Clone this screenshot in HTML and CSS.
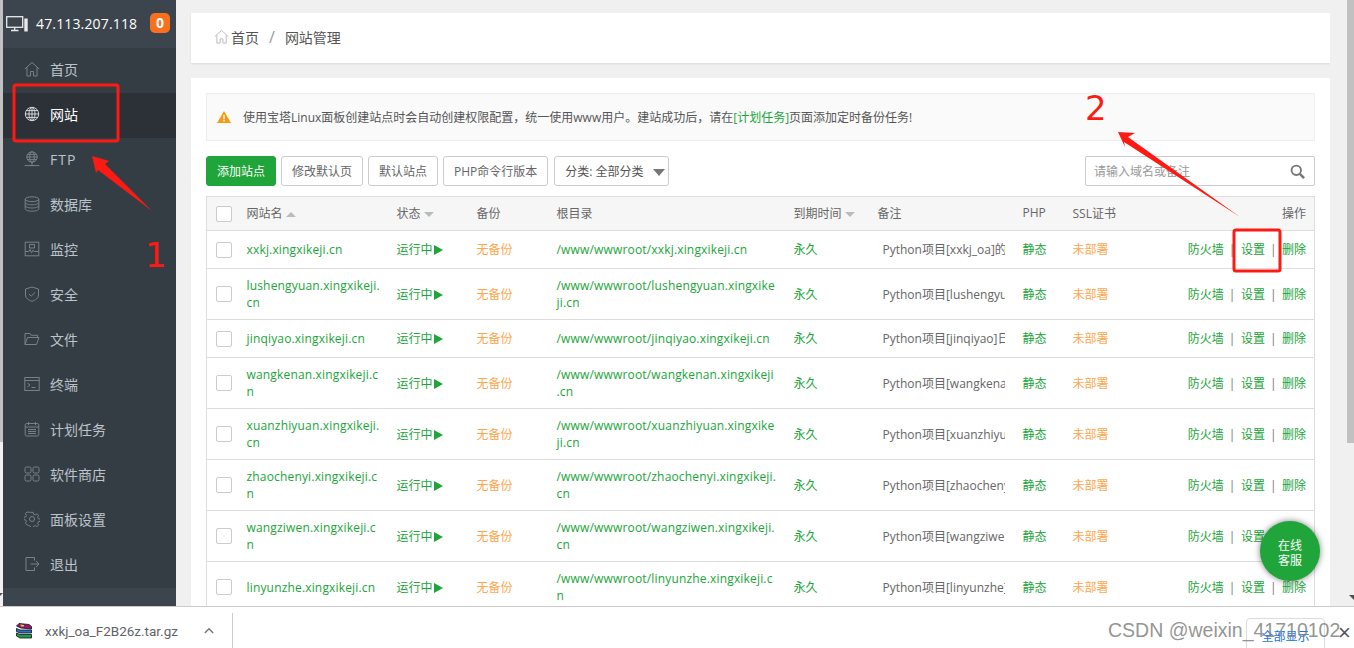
FILE: index.html
```html
<!DOCTYPE html>
<html lang="zh-CN">
<head>
    <meta charset="UTF-8">
    <title>网站管理</title>
    <link rel="stylesheet" href="styles.css">
</head>
<body>
    <div class="app">
        <div class="leftbar">
            <div class="leftbar-thumb"></div>
            <i class="leftbar-arrow"></i>
        </div>
        <aside class="sidebar">
            <div class="server">
                <svg class="server-icon" viewBox="0 0 22 16" fill="none" stroke="#e8eaec" stroke-width="1.300"><rect x=".7" y=".7" width="16" height="10.600"/><path d="M5 14.500h7.500M8.700 11.300v3"/><rect x="18.300" y="2.500" width="3.400" height="13" fill="#e8eaec" stroke="none"/></svg>
                <span class="server-ip">47.113.207.118</span>
                <span class="badge">0</span>
            </div>
            <nav class="menu">
                <a class="menu-item">
                    <svg viewBox="0 0 16 16"><path d="M.8 8 8 1.500 15.200 8M3 6.500V15h3.500v-4.500h3V15H13V6.500"/></svg>首页
                </a>
                <a class="menu-item active">
                    <svg viewBox="0 0 16 16"><circle cx="8" cy="8" r="6.700"/><ellipse cx="8" cy="8" rx="3" ry="6.700"/><path d="M8 1.300v13.400M1.300 8h13.400M2.300 4.600h11.400M2.300 11.400h11.400"/></svg>网站
                </a>
                <a class="menu-item menu-ftp">
                    <svg viewBox="0 0 16 16"><circle cx="8" cy="6" r="5.200"/><ellipse cx="8" cy="6" rx="2.300" ry="5.200"/><path d="M2.800 6h10.400M3.600 3.400h8.800M3.600 8.600h8.800M8 11.200v2.600M.6 14.600h14.800M6 14.600h4"/></svg>FTP
                </a>
                <a class="menu-item">
                    <svg viewBox="0 0 16 16"><ellipse cx="8" cy="3.200" rx="6.800" ry="2.400"/><path d="M1.200 3.200v9.600c0 1.300 3 2.400 6.800 2.400s6.800-1.100 6.800-2.400V3.200M1.200 6.400c0 1.300 3 2.400 6.800 2.400s6.800-1.100 6.800-2.400M1.200 9.600c0 1.300 3 2.400 6.800 2.400s6.800-1.100 6.800-2.400"/></svg>数据库
                </a>
                <a class="menu-item">
                    <svg viewBox="0 0 16 16"><rect x="1.200" y="1.200" width="13.600" height="13.600"/><path d="M1.200 10.500h3.600l1.200-2 1.500 3.200 1.600-2.600.9 1.400h5M5.500 3.500h5V7h-5z"/></svg>监控
                </a>
                <a class="menu-item">
                    <svg viewBox="0 0 16 16"><path d="M8 1 14.500 3v6c0 3-3 5.200-6.500 6.300C4.500 14.200 1.500 12 1.500 9V3z"/><path d="M5 8l2.200 2.200L11 6.500"/></svg>安全
                </a>
                <a class="menu-item">
                    <svg viewBox="0 0 16 16"><path d="M1 13.500V2.500h5l1.200 1.800H13.500V6.500M1 13.500h11.500L15 6.500H3.500z"/></svg>文件
                </a>
                <a class="menu-item">
                    <svg viewBox="0 0 16 16"><rect x=".8" y="1.500" width="14.400" height="13"/><path d="M.8 4.500h14.400M3.500 7l2.500 2-2.500 2M7.500 11.500h4"/></svg>终端
                </a>
                <a class="menu-item">
                    <svg viewBox="0 0 16 16"><rect x="1.200" y="2.500" width="13.600" height="12.500" rx="1.500"/><path d="M1.200 6h13.600M4.500 1v3M11.500 1v3M4 8.500h8M4 10.500h8M4 12.500h8"/></svg>计划任务
                </a>
                <a class="menu-item">
                    <svg viewBox="0 0 16 16"><rect x="1" y="1" width="6" height="6" rx="1.500"/><rect x="9" y="1" width="6" height="6" rx="1.500"/><rect x="1" y="9" width="6" height="6" rx="1.500"/><rect x="9" y="9" width="6" height="6" rx="1.500"/></svg>软件商店
                </a>
                <a class="menu-item">
                    <svg viewBox="0 0 16 16"><path d="M6.800 1h2.400l.4 2 1.600.7 1.800-1.100 1.700 1.700-1.100 1.800.7 1.600 2 .4v2.400l-2 .4-.7 1.600 1.100 1.800-1.700 1.700-1.800-1.100-1.600.7-.4 2H6.800l-.4-2-1.600-.7L3 14.100l-1.700-1.700 1.100-1.800-.7-1.600-2-.4V6.200l2-.4.7-1.600L1.300 2.400 3 .7z" transform="translate(0 .4) scale(1 .95)"/><circle cx="8" cy="8" r="2.500"/></svg>面板设置
                </a>
                <a class="menu-item">
                    <svg viewBox="0 0 16 16"><path d="M10.500 4.500V1.500H2v13h8.500v-3M6.500 8h8.500M12 5l3 3-3 3"/></svg>退出
                </a>
            </nav>
        </aside>

        <main class="main">
            <div class="crumb">
                <svg class="crumb-home" viewBox="0 0 16 16"><path d="M.8 8 8 1.500 15.200 8M3 6.500V15h3.500v-4.500h3V15H13V6.500"/></svg>
                <span>首页</span>
                <span class="crumb-sep">/</span>
                <span>网站管理</span>
            </div>

            <section class="panel">
                <div class="notice">
                    <svg class="notice-icon" viewBox="0 0 14 12"><path d="M7 0 14 12H0z" fill="#f39c12"/><path d="M6.300 4h1.400v4.200H6.300zM6.300 9h1.400v1.400H6.300z" fill="#fff"/></svg>
                    <span>使用宝塔Linux面板创建站点时会自动创建权限配置，统一使用www用户。建站成功后，请在<a class="link">[计划任务]</a>页面添加定时备份任务!</span>
                </div>

                <div class="toolbar">
                    <button class="btn btn-green">添加站点</button>
                    <button class="btn">修改默认页</button>
                    <button class="btn">默认站点</button>
                    <button class="btn">PHP命令行版本</button>
                    <button class="btn btn-select">分类: 全部分类<i class="caret"></i></button>
                    <div class="search">
                        <span class="search-text">请输入域名或备注</span>
                        <svg viewBox="0 0 16 16" fill="none" stroke="#777" stroke-width="2"><circle cx="6.700" cy="6.700" r="5"/><path d="M10.500 10.500 15 15" stroke-width="2.600"/></svg>
                    </div>
                </div>

                <table class="sites">
                    <colgroup>
                        <col class="c-check"><col class="c-name"><col class="c-status"><col class="c-backup"><col class="c-root"><col class="c-expire"><col class="c-note"><col class="c-php"><col class="c-ssl"><col class="c-ops">
                    </colgroup>
                    <thead>
                        <tr>
                            <th><span class="check"></span></th>
                            <th>网站名 <i class="sort-up"></i></th>
                            <th>状态 <i class="sort-down"></i></th>
                            <th>备份</th>
                            <th>根目录</th>
                            <th>到期时间 <i class="sort-down"></i></th>
                            <th>备注</th>
                            <th>PHP</th>
                            <th>SSL证书</th>
                            <th class="ops">操作</th>
                        </tr>
                    </thead>
                    <tbody>
                        <tr>
                            <td><span class="check"></span></td>
                            <td class="green url">xxkj.xingxikeji.cn</td>
                            <td class="green">运行中<i class="play"></i></td>
                            <td class="orange">无备份</td>
                            <td class="green url">/www/wwwroot/xxkj.xingxikeji.cn</td>
                            <td class="green">永久</td>
                            <td><div class="note">Python项目[xxkj_oa]的</div></td>
                            <td class="green">静态</td>
                            <td class="orange">未部署</td>
                            <td class="ops"><a>防火墙</a><b>|</b><a>设置</a><b>|</b><a>删除</a></td>
                        </tr>
                        <tr>
                            <td><span class="check"></span></td>
                            <td class="green url">lushengyuan.xingxikeji.cn</td>
                            <td class="green">运行中<i class="play"></i></td>
                            <td class="orange">无备份</td>
                            <td class="green url">/www/wwwroot/lushengyuan.xingxikeji.cn</td>
                            <td class="green">永久</td>
                            <td><div class="note">Python项目[lushengyuan]</div></td>
                            <td class="green">静态</td>
                            <td class="orange">未部署</td>
                            <td class="ops"><a>防火墙</a><b>|</b><a>设置</a><b>|</b><a>删除</a></td>
                        </tr>
                        <tr>
                            <td><span class="check"></span></td>
                            <td class="green url">jinqiyao.xingxikeji.cn</td>
                            <td class="green">运行中<i class="play"></i></td>
                            <td class="orange">无备份</td>
                            <td class="green url">/www/wwwroot/jinqiyao.xingxikeji.cn</td>
                            <td class="green">永久</td>
                            <td><div class="note">Python项目[jinqiyao]日</div></td>
                            <td class="green">静态</td>
                            <td class="orange">未部署</td>
                            <td class="ops"><a>防火墙</a><b>|</b><a>设置</a><b>|</b><a>删除</a></td>
                        </tr>
                        <tr>
                            <td><span class="check"></span></td>
                            <td class="green url">wangkenan.xingxikeji.cn</td>
                            <td class="green">运行中<i class="play"></i></td>
                            <td class="orange">无备份</td>
                            <td class="green url">/www/wwwroot/wangkenan.xingxikeji.cn</td>
                            <td class="green">永久</td>
                            <td><div class="note">Python项目[wangkenan]</div></td>
                            <td class="green">静态</td>
                            <td class="orange">未部署</td>
                            <td class="ops"><a>防火墙</a><b>|</b><a>设置</a><b>|</b><a>删除</a></td>
                        </tr>
                        <tr>
                            <td><span class="check"></span></td>
                            <td class="green url">xuanzhiyuan.xingxikeji.cn</td>
                            <td class="green">运行中<i class="play"></i></td>
                            <td class="orange">无备份</td>
                            <td class="green url">/www/wwwroot/xuanzhiyuan.xingxikeji.cn</td>
                            <td class="green">永久</td>
                            <td><div class="note">Python项目[xuanzhiyuan]</div></td>
                            <td class="green">静态</td>
                            <td class="orange">未部署</td>
                            <td class="ops"><a>防火墙</a><b>|</b><a>设置</a><b>|</b><a>删除</a></td>
                        </tr>
                        <tr>
                            <td><span class="check"></span></td>
                            <td class="green url">zhaochenyi.xingxikeji.cn</td>
                            <td class="green">运行中<i class="play"></i></td>
                            <td class="orange">无备份</td>
                            <td class="green url">/www/wwwroot/zhaochenyi.xingxikeji.cn</td>
                            <td class="green">永久</td>
                            <td><div class="note">Python项目[zhaochenyi]</div></td>
                            <td class="green">静态</td>
                            <td class="orange">未部署</td>
                            <td class="ops"><a>防火墙</a><b>|</b><a>设置</a><b>|</b><a>删除</a></td>
                        </tr>
                        <tr>
                            <td><span class="check"></span></td>
                            <td class="green url">wangziwen.xingxikeji.cn</td>
                            <td class="green">运行中<i class="play"></i></td>
                            <td class="orange">无备份</td>
                            <td class="green url">/www/wwwroot/wangziwen.xingxikeji.cn</td>
                            <td class="green">永久</td>
                            <td><div class="note">Python项目[wangziwen]</div></td>
                            <td class="green">静态</td>
                            <td class="orange">未部署</td>
                            <td class="ops"><a>防火墙</a><b>|</b><a>设置</a><b>|</b><a>删除</a></td>
                        </tr>
                        <tr>
                            <td><span class="check"></span></td>
                            <td class="green url">linyunzhe.xingxikeji.cn</td>
                            <td class="green">运行中<i class="play"></i></td>
                            <td class="orange">无备份</td>
                            <td class="green url">/www/wwwroot/linyunzhe.xingxikeji.cn</td>
                            <td class="green">永久</td>
                            <td><div class="note">Python项目[linyunzhe]</div></td>
                            <td class="green">静态</td>
                            <td class="orange">未部署</td>
                            <td class="ops"><a>防火墙</a><b>|</b><a>设置</a><b>|</b><a>删除</a></td>
                        </tr>
                    </tbody>
                </table>
            </section>
        </main>

        <div class="rightbar">
            <div class="rightbar-thumb"></div>
            <i class="rightbar-arrow"></i>
        </div>

        <a class="service">在线<br>客服</a>
    </div>

    <footer class="downloads">
        <svg class="rar" viewBox="0 0 16 16">
            <path d="M3 .5 13 1.500 15.500 3.500V6L5 5 .5 3z" fill="#8e1a6e" stroke="#111" stroke-width=".8"/>
            <path d="M.5 5.500 4 7h11.500v3H4L.5 8.500z" fill="#2a6fd0" stroke="#111" stroke-width=".8"/>
            <path d="M.5 10 4 11.500h11.500v3.500H4L.5 13z" fill="#1f9a4b" stroke="#111" stroke-width=".8"/>
            <path d="M4.500 1.500 8 2v1.500H5z" fill="#e8c84a"/>
        </svg>
        <span class="file-name">xxkj_oa_F2B26z.tar.gz</span>
        <svg class="chevron" viewBox="0 0 12 8" fill="none" stroke="#777" stroke-width="1.800"><path d="M1 7l5-5 5 5"/></svg>
        <span class="divider"></span>
        <button class="show-all">全部显示</button>
        <span class="close">×</span>
        <span class="watermark">CSDN @weixin_41710102</span>
    </footer>

    <!-- 标注 -->
    <svg class="marks" viewBox="0 0 1354 648">
        <rect x="14" y="85" width="104" height="56" rx="2" fill="none" stroke="#fe1a12" stroke-width="3"/>
        <rect x="1234" y="230" width="46" height="41" rx="2" fill="none" stroke="#fe1a12" stroke-width="3"/>
        <path d="M92 156 109 161 105 164 152 211 98 170 96 173z" fill="#fe1a12"/>
        <path d="M1118 132 1135 133 1128 137 1240 217 1124 142 1125 147z" fill="#fe1a12"/>
    </svg>
    <span class="mark-num mark-1">1</span>
    <span class="mark-num mark-2">2</span>
</body>
</html>
```

FILE: styles.css
```css
* {
    box-sizing: border-box;
}
html, body {
    margin: 0;
    height: 648px;
    overflow: hidden;
}
body {
    font-family: "Open Sans", "Noto Sans CJK SC", sans-serif;
    font-size: 12px;
    color: #666;
    background-color: #f0f0f0;
}
.app {
    display: flex;
    height: 606px;
    overflow: hidden;
}

/* 滚动条 */
.leftbar {
    position: relative;
    width: 3px;
    background-color: #f1f1f1;
}
.leftbar-thumb {
    height: 442px;
    background-color: #c1c1c1;
}
.leftbar-arrow {
    position: absolute;
    right: 0;
    top: 593px;
    border-left: 3px solid #505050;
    border-bottom: 3px solid transparent;
}
.rightbar {
    position: relative;
    width: 24px;
    padding-left: 17px;
    background-color: #f0f0f0;
}
.rightbar-thumb {
    height: 443px;
    background-color: #c1c1c1;
}
.rightbar-arrow {
    position: absolute;
    right: 0;
    top: 595px;
    border-left: 5px solid transparent;
    border-top: 5px solid #505050;
}

/* 左侧菜单 */
.sidebar {
    width: 173px;
    flex-shrink: 0;
    background-color: #3c444d;
}
.server {
    display: flex;
    align-items: center;
    height: 48px;
    padding-left: 3px;
    color: #fff;
    font-size: 14px;
}
.server-icon {
    width: 22px;
    height: 16px;
    margin-right: 8px;
}
.server-ip {
    flex: 1;
    padding-bottom: 2px;
    letter-spacing: 0.15px;
}
.badge {
    width: 20px;
    height: 20px;
    margin-top: -2px;
    margin-right: 6px;
    border-radius: 5px;
    background-color: #f7701e;
    font-weight: bold;
    text-align: center;
    line-height: 20px;
}
.menu {
    background-color: #353d44;
}
.menu-item {
    display: flex;
    align-items: center;
    height: 45px;
    padding: 0 0 3px 21px;
    color: #bbc3cb;
    font-size: 14px;
}
.menu-ftp {
    letter-spacing: 1px;
}
.menu-item svg {
    width: 16px;
    height: 16px;
    margin-right: 10px;
    fill: none;
    stroke: #7a8087;
    stroke-width: 1;
}
.menu-item.active {
    background-color: #2c3138;
    color: #fff;
}
.menu-item.active svg {
    stroke: #d5d8db;
}

/* 内容区 */
.main {
    flex: 1;
    min-width: 0;
    padding: 13px 0 0 15px;
}
.crumb {
    display: flex;
    align-items: center;
    height: 50px;
    padding: 0 0 3px 23px;
    background-color: #fff;
    box-shadow: 0 1px 2px rgba(0, 0, 0, 0.1);
    color: #555;
    font-size: 14px;
}
.crumb-home {
    width: 15px;
    height: 15px;
    margin-right: 2px;
    fill: none;
    stroke: #bbb;
}
.crumb-sep {
    margin: 0 10px;
    color: #999;
    font-size: 16px;
}
.panel {
    height: 540px;
    margin-top: 15px;
    padding: 15px;
    background-color: #fff;
}
.notice {
    display: flex;
    align-items: center;
    height: 48px;
    padding-left: 10px;
    border: 1px solid #eee;
    background-color: #fafafa;
    color: #555;
    font-size: 12px;
}
.notice-icon {
    width: 14px;
    height: 12px;
    margin-right: 12px;
}
.link {
    color: #20a53a;
}
.toolbar {
    display: flex;
    gap: 5px;
    height: 30px;
    margin: 15px 0 10px;
}
.btn {
    height: 30px;
    padding: 0 10px;
    border: 1px solid #ccc;
    border-radius: 3px;
    background-color: #fff;
    color: #666;
    font-family: inherit;
    font-size: 12px;
}
.btn-green {
    width: 70px;
    padding: 0;
    border-color: #20a53a;
    background-color: #20a53a;
    color: #fff;
}
.btn-select {
    width: 115px;
    margin-left: 1px;
    padding: 0 0 0 10px;
    color: #555;
    text-align: left;
}
.caret {
    display: inline-block;
    margin-left: 9px;
    border-top: 7px solid #777;
    border-left: 6px solid transparent;
    border-right: 6px solid transparent;
    vertical-align: middle;
}
.search {
    display: flex;
    align-items: center;
    justify-content: space-between;
    width: 230px;
    height: 30px;
    margin-left: auto;
    padding: 0 9px 0 8px;
    border: 1px solid #ccc;
    border-radius: 2px;
    color: #999;
}
.search svg {
    width: 15px;
    height: 15px;
}

/* 表格 */
.sites {
    width: 100%;
    border-collapse: collapse;
    table-layout: fixed;
    border: 1px solid #ddd;
}
.c-check { width: 40px; }
.c-name { width: 150px; }
.c-status { width: 80px; }
.c-backup { width: 80px; }
.c-root { width: 237px; }
.c-expire { width: 84px; }
.c-note { width: 145px; }
.c-php { width: 50px; }
.c-ssl { width: 100px; }
.sites th {
    height: 34px;
    padding: 0 0 2px;
    background-color: #f6f6f6;
    border-bottom: 1px solid #ddd;
    color: #666;
    font-weight: normal;
    text-align: left;
}
.sites td {
    height: 38px;
    padding: 8px 15px 8px 0;
    border-bottom: 1px solid #ddd;
    line-height: 17px;
    word-break: break-all;
}
.sites th:first-child, .sites td:first-child {
    padding: 0 0 0 9px;
}
.url {
    letter-spacing: 0.17px;
    line-break: anywhere;
}
.sites td.url:nth-child(5) {
    padding-right: 17px;
}
.check {
    display: block;
    width: 16px;
    height: 16px;
    border: 1px solid #ccc;
    border-radius: 2px;
    background-color: #fff;
}
.sort-up, .sort-down {
    display: inline-block;
    border-left: 5px solid transparent;
    border-right: 5px solid transparent;
    vertical-align: middle;
}
.sort-up {
    border-bottom: 5px solid #bbb;
}
.sort-down {
    border-top: 5px solid #bbb;
}
.green {
    color: #20a53a;
}
.orange {
    color: #ffa64d;
}
.play {
    display: inline-block;
    margin-left: 1px;
    border-left: 9px solid #20a53a;
    border-top: 5px solid transparent;
    border-bottom: 5px solid transparent;
    vertical-align: -1px;
}
.note {
    width: 122px;
    margin-left: 5px;
    overflow: hidden;
    white-space: nowrap;
    color: #666;
}
.sites .ops {
    padding-right: 8px;
    text-align: right;
    white-space: nowrap;
}
.ops a {
    color: #20a53a;
}
.ops b {
    margin: 0 5.500px 0 5px;
    color: #777;
    font-weight: normal;
}

/* 客服按钮 */
.service {
    position: absolute;
    left: 1260px;
    top: 521px;
    width: 60px;
    height: 60px;
    padding-top: 17px;
    border-radius: 50%;
    background-color: #20a53a;
    box-shadow: 0 0 6px rgba(0, 0, 0, 0.5);
    color: #fff;
    font-size: 12px;
    line-height: 15px;
    text-align: center;
}

/* 下载栏 */
.downloads {
    position: relative;
    display: flex;
    align-items: center;
    height: 42px;
    padding: 6px 0 0 16px;
    border-top: 1px solid #ccc;
    background-color: #fff;
}
.rar {
    width: 16px;
    height: 16px;
    margin-right: 13px;
}
.file-name {
    width: 159px;
    color: #5f6368;
    font-family: Roboto, sans-serif;
    font-size: 13.500px;
}
.chevron {
    width: 10px;
    height: 7px;
    margin-right: 18px;
}
.divider {
    width: 1px;
    height: 35px;
    margin-top: -6px;
    align-self: flex-end;
    background-color: #ccc;
}
.show-all {
    position: absolute;
    left: 1246px;
    top: 11px;
    width: 79px;
    height: 36px;
    padding: 0;
    border: 1px solid #dadce0;
    border-radius: 4px;
    background-color: #fff;
    color: #1a73e8;
    font-family: inherit;
    font-size: 12px;
}
.close {
    position: absolute;
    left: 1338px;
    top: 14px;
    color: #555;
    font-family: "Liberation Sans", sans-serif;
    font-size: 22px;
    line-height: 24px;
}
.watermark {
    position: absolute;
    left: 1108px;
    top: 11px;
    color: rgba(120, 120, 120, 0.8);
    font-family: "Liberation Sans", sans-serif;
    font-size: 19.500px;
    line-height: 24px;
}

/* 标注 */
.marks {
    position: absolute;
    left: 0;
    top: 0;
    width: 1354px;
    height: 648px;
}
.mark-num {
    position: absolute;
    color: #fe1a12;
    font-family: "DejaVu Sans", sans-serif;
    font-size: 34px;
    line-height: 40px;
}
.mark-1 {
    left: 145px;
    top: 235px;
}
.mark-2 {
    left: 1085px;
    top: 88px;
}
```
